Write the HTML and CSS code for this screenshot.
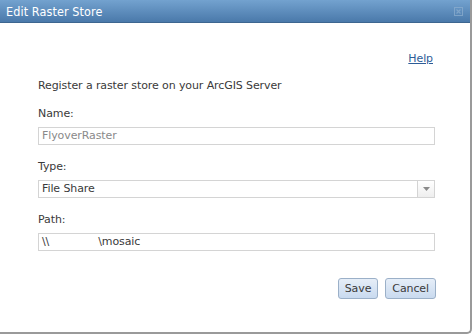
FILE: index.html
```html
<!DOCTYPE html>
<html>
<head>
<meta charset="utf-8">
<link rel="stylesheet" href="styles.css">
</head>
<body>
<div class="dialog">
  <div class="titlebar">
    <span class="title">Edit Raster Store</span>
    <span class="close" aria-label="close">
      <svg width="9" height="9" viewBox="0 0 9 9"><rect x="0.5" y="0.5" width="8" height="8" fill="none" stroke="#8fb0d0" stroke-width="1"/><path d="M2.5 2.5 L6.5 6.5 M6.5 2.5 L2.5 6.5" stroke="#8fb0d0" stroke-width="1.2"/></svg>
    </span>
  </div>
  <div class="content">
    <div class="help-row"><a class="help" href="#">Help</a></div>
    <p class="intro">Register a raster store on your ArcGIS Server</p>
    <div class="field">
      <label class="label">Name:</label>
      <div class="box input muted">FlyoverRaster</div>
    </div>
    <div class="field">
      <label class="label">Type:</label>
      <div class="box select">
        <span class="select-text">File Share</span>
        <span class="arrow"><svg width="7" height="4" viewBox="0 0 7 4"><path d="M0 0 H7 L3.5 4 Z" fill="#8a8a8a"/></svg></span>
      </div>
    </div>
    <div class="field">
      <label class="label">Path:</label>
      <div class="box input"><span class="path-a">\\</span><span class="path-b">\mosaic</span></div>
    </div>
    <div class="buttons">
      <button class="btn">Save</button>
      <button class="btn">Cancel</button>
    </div>
  </div>
</div>
</body>
</html>
```
FILE: styles.css
```css
html, body {
  margin: 0;
  padding: 0;
  background: #ffffff;
}
body {
  font-family: "DejaVu Sans", sans-serif;
  font-size: 11px;
  letter-spacing: -0.1px;
  color: #3a3a3a;
}
.dialog {
  width: 470px;
  height: 332px;
  border-right: 2px solid #9a9a9a;
  border-bottom: 2px solid #9a9a9a;
  border-bottom-right-radius: 5px;
  background: #fff;
  display: flex;
  flex-direction: column;
}
.titlebar {
  height: 22px;
  border-bottom: 1px solid #3d6690;
  background: linear-gradient(#73a2cf, #4a79aa);
  display: flex;
  align-items: center;
  justify-content: space-between;
  padding: 0 7px 0 6px;
}
.title {
  color: #ffffff;
  font-family: "DejaVu Sans Condensed", "DejaVu Sans", sans-serif;
  font-size: 12.5px;
  letter-spacing: 0.1px;
  padding-top: 1px;
}
.close {
  display: flex;
  opacity: 0.7;
}
.content {
  padding: 0 35px 0 38px;
  display: flex;
  flex-direction: column;
}
.help-row {
  display: flex;
  justify-content: flex-end;
  padding-top: 29px;
  padding-right: 2px;
}
.help {
  color: #2d5c97;
  text-decoration: underline;
}
.intro {
  margin: 14px 0 0 0;
  line-height: 13px;
}
.field {
  display: flex;
  flex-direction: column;
}
.label {
  margin-top: 15px;
  line-height: 13px;
  margin-bottom: 7px;
}
.box {
  height: 16px;
  border: 1px solid #d4d4d4;
  display: flex;
  align-items: center;
  padding-left: 3px;
  line-height: 14px;
}
.muted {
  color: #8a8a8a;
}
.select {
  padding-left: 3px;
  padding-right: 0;
}
.select-text {
  flex: 1;
}
.arrow {
  width: 16px;
  height: 16px;
  border-left: 1px solid #d4d4d4;
  background: linear-gradient(#ffffff, #eeeeee);
  display: flex;
  align-items: center;
  justify-content: center;
}
.path-b {
  margin-left: 49px;
}
.buttons {
  display: flex;
  justify-content: flex-end;
  gap: 7px;
  margin-top: 27px;
  margin-right: -1px;
}
.btn {
  font-family: inherit;
  font-size: 11px;
  letter-spacing: -0.1px;
  color: #3a3a3a;
  height: 21px;
  padding: 0 6px;
  border: 1px solid #9bb0c8;
  border-radius: 3px;
  background: linear-gradient(#e6eef8, #c9daef);
  line-height: 16px;
}
```
